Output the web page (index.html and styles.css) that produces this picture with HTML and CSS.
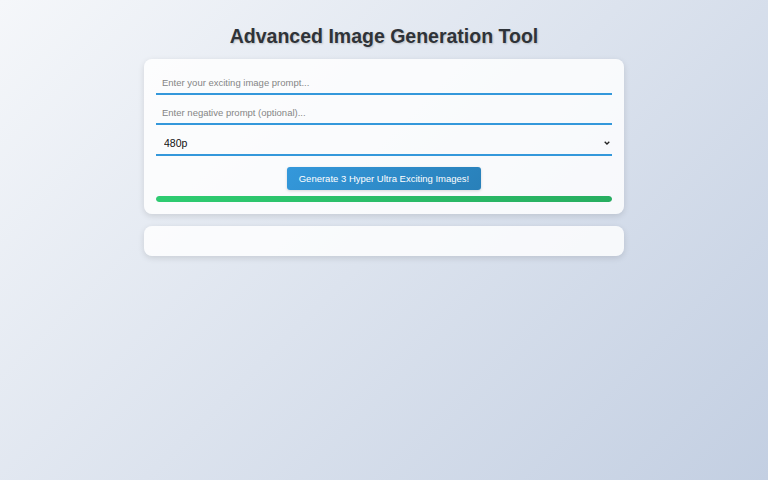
FILE: index.html
```html
<!DOCTYPE html>
<html lang="en">
<head>
<meta charset="utf-8">
<title>Advanced Image Generation Tool</title>
<link rel="stylesheet" href="styles.css">
</head>
<body>
  <main class="container">
    <h1 class="title">Advanced Image Generation Tool</h1>
    <section class="card">
      <input class="field" type="text" placeholder="Enter your exciting image prompt...">
      <input class="field" type="text" placeholder="Enter negative prompt (optional)...">
      <select class="field select">
        <option>480p</option>
        <option>720p</option>
        <option>1080p</option>
      </select>
      <div class="actions">
        <button class="btn" type="button">Generate 3 Hyper Ultra Exciting Images!</button>
      </div>
      <div class="progress"><div class="progress-fill" style="width:100%"></div></div>
    </section>
    <section class="card results"></section>
  </main>
</body>
</html>
```
FILE: styles.css
```css
html, body {
  margin: 0;
  height: 100%;
}

body {
  font-family: "Liberation Sans", Arial, sans-serif;
  background: linear-gradient(135deg, #f5f7fa 0%, #c3cfe2 100%);
  color: #333;
}

.container {
  width: 480px;
  margin: 0 auto;
  padding-top: 25px;
}

.title {
  margin: 0 0 11px;
  font-size: 19.5px;
  line-height: 23px;
  text-align: center;
  color: #2f3338;
  text-shadow: 1px 1px 2px rgba(0, 0, 0, 0.18);
}

.card {
  background: rgba(255, 255, 255, 0.82);
  border-radius: 8px;
  box-shadow: 0 2px 6px rgba(0, 0, 0, 0.12);
  padding: 12px;
  display: flex;
  flex-direction: column;
}

.field {
  box-sizing: border-box;
  width: 100%;
  height: 24px;
  margin-bottom: 6px;
  padding: 0 6px;
  border: none;
  border-bottom: 2px solid #3498db;
  background: transparent;
  font-family: "Liberation Sans", Arial, sans-serif;
  font-size: 9.5px;
  color: #333;
  outline: none;
}

.field::placeholder {
  color: #858585;
}

/* native arrow replaced by a small chevron on the right */
.select {
  -webkit-appearance: none;
  appearance: none;
  height: 25px;
  margin-bottom: 0;
  padding: 0 8px;
  font-size: 10.5px;
  color: #111;
  background-image: url("data:image/svg+xml,%3Csvg xmlns='http://www.w3.org/2000/svg' width='6' height='4' viewBox='0 0 6 4'%3E%3Cpath d='M0.7 0.7 L3 3 L5.3 0.7' fill='none' stroke='%23222' stroke-width='1.3'/%3E%3C/svg%3E");
  background-repeat: no-repeat;
  background-position: right 2px center;
  background-size: 6px 4px;
}

.actions {
  display: flex;
  justify-content: center;
  margin-top: 11px;
}

.btn {
  height: 23px;
  padding: 0 12px;
  border: none;
  border-radius: 3px;
  background: linear-gradient(135deg, #3498db, #2980b9);
  color: #fff;
  font-family: "Liberation Sans", Arial, sans-serif;
  font-size: 9.5px;
  box-shadow: 0 1px 3px rgba(0, 0, 0, 0.15);
}

.progress {
  margin-top: 6px;
  height: 6px;
  border-radius: 3px;
  background: #e0e6ee;
  overflow: hidden;
}

.progress-fill {
  height: 100%;
  background: linear-gradient(90deg, #2ecc71, #27ae60);
  border-radius: 3px;
}

.results {
  margin-top: 12px;
  height: 30px;
  padding: 0;
}
```
